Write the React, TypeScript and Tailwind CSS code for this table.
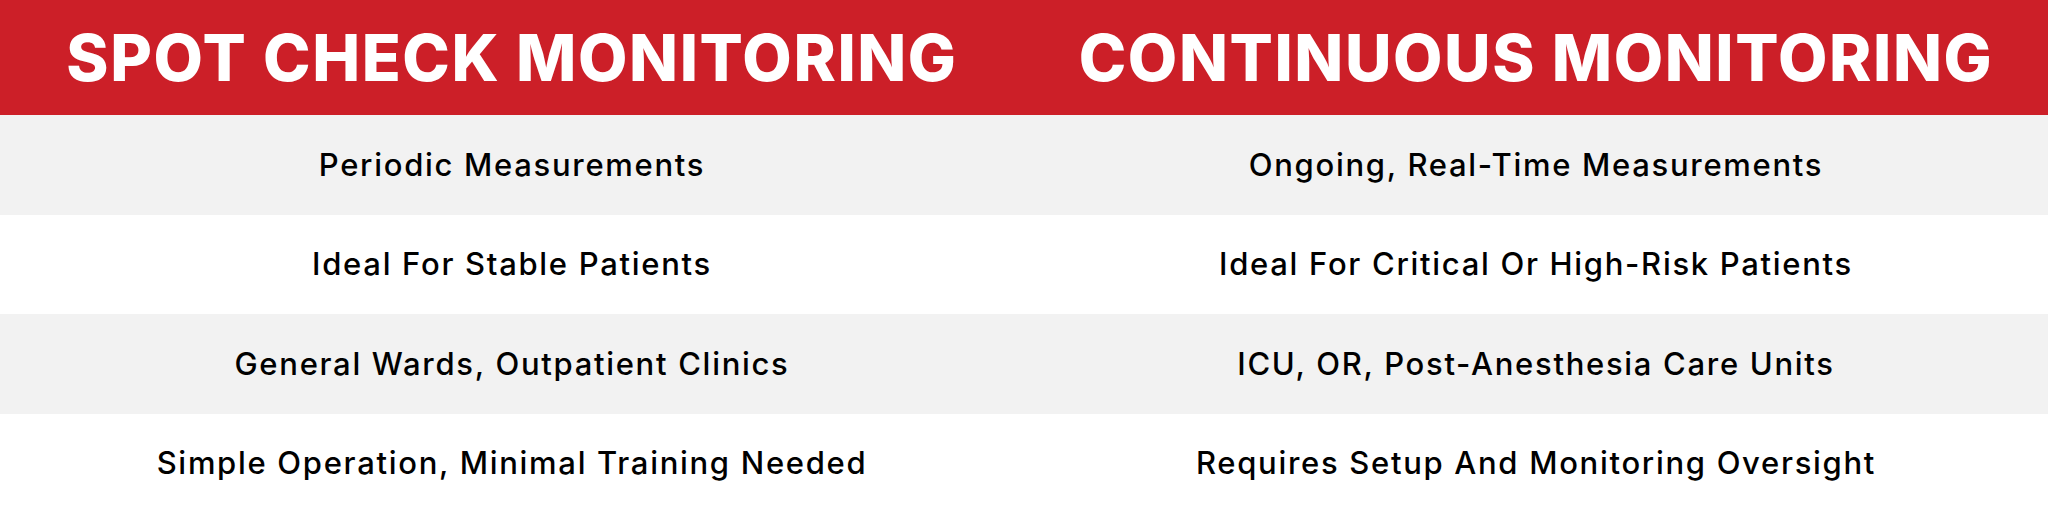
const rows: [string, string][] = [
  ['Periodic Measurements', 'Ongoing, Real-Time Measurements'],
  ['Ideal For Stable Patients', 'Ideal For Critical Or High-Risk Patients'],
  ['General Wards, Outpatient Clinics', 'ICU, OR, Post-Anesthesia Care Units'],
  ['Simple Operation, Minimal Training Needed', 'Requires Setup And Monitoring Oversight'],
];

export default function App() {
  return (
    <div className="w-[2048px] h-[513px] flex flex-col bg-white font-['Inter',sans-serif]">
      <div className="h-[115px] grid grid-cols-2 bg-[#cc1f28] text-white">
        <div className="flex items-center justify-center text-[64px] font-extrabold tracking-[1.6px]">
          SPOT CHECK MONITORING
        </div>
        <div className="flex items-center justify-center text-[64px] font-extrabold tracking-[1.6px]">
          CONTINUOUS MONITORING
        </div>
      </div>
      {rows.map(([left, right], i) => (
        <div
          key={left}
          className={`grid grid-cols-2 text-[31px] font-medium tracking-[1.7px] text-black ${i % 2 === 0 ? 'bg-[#f2f2f2] h-[100px]' : 'bg-white h-[99px]'}`}
        >
          <div className="flex items-center justify-center">{left}</div>
          <div className="flex items-center justify-center">{right}</div>
        </div>
      ))}
    </div>
  );
}
